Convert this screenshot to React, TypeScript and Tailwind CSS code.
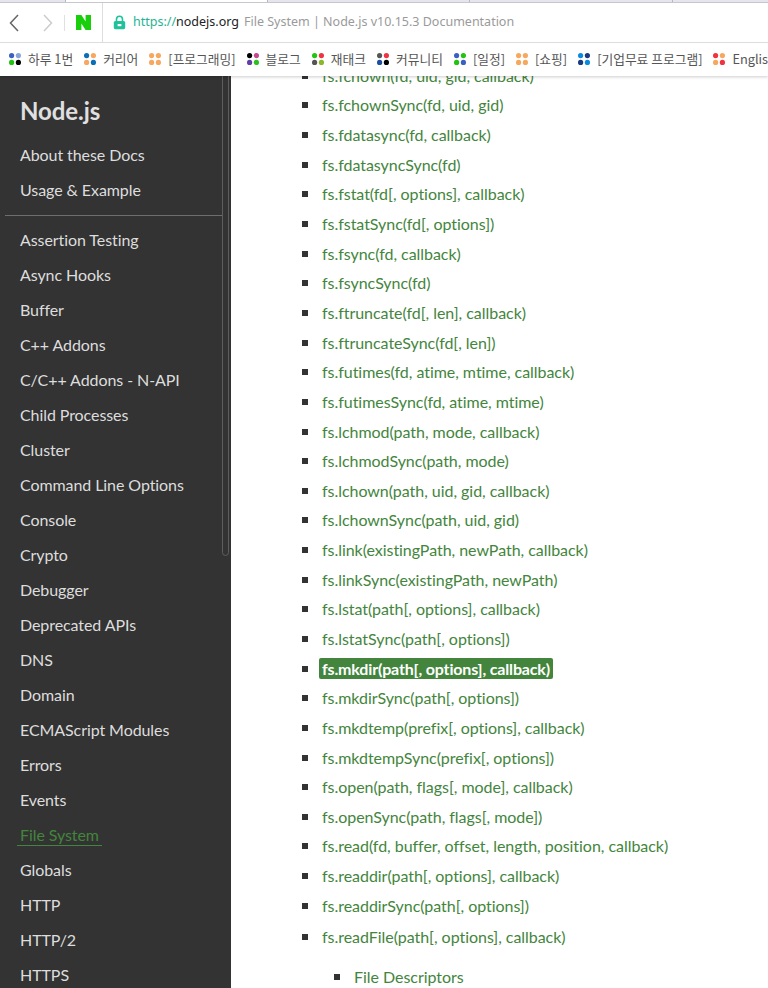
import React from 'react';

const navTop = ['About these Docs', 'Usage & Example'];
const navMain = [
  'Assertion Testing', 'Async Hooks', 'Buffer', 'C++ Addons', 'C/C++ Addons - N-API', 'Child Processes',
  'Cluster', 'Command Line Options', 'Console', 'Crypto', 'Debugger', 'Deprecated APIs', 'DNS', 'Domain',
  'ECMAScript Modules', 'Errors', 'Events', 'File System', 'Globals', 'HTTP', 'HTTP/2', 'HTTPS',
];

const fsItems = [
  'fs.fchown(fd, uid, gid, callback)', 'fs.fchownSync(fd, uid, gid)', 'fs.fdatasync(fd, callback)',
  'fs.fdatasyncSync(fd)', 'fs.fstat(fd[, options], callback)', 'fs.fstatSync(fd[, options])',
  'fs.fsync(fd, callback)', 'fs.fsyncSync(fd)', 'fs.ftruncate(fd[, len], callback)', 'fs.ftruncateSync(fd[, len])',
  'fs.futimes(fd, atime, mtime, callback)', 'fs.futimesSync(fd, atime, mtime)', 'fs.lchmod(path, mode, callback)',
  'fs.lchmodSync(path, mode)', 'fs.lchown(path, uid, gid, callback)', 'fs.lchownSync(path, uid, gid)',
  'fs.link(existingPath, newPath, callback)', 'fs.linkSync(existingPath, newPath)', 'fs.lstat(path[, options], callback)',
  'fs.lstatSync(path[, options])', 'fs.mkdir(path[, options], callback)', 'fs.mkdirSync(path[, options])',
  'fs.mkdtemp(prefix[, options], callback)', 'fs.mkdtempSync(prefix[, options])', 'fs.open(path, flags[, mode], callback)',
  'fs.openSync(path, flags[, mode])', 'fs.read(fd, buffer, offset, length, position, callback)',
  'fs.readdir(path[, options], callback)', 'fs.readdirSync(path[, options])',
];

const orange = '#f7a860';
const red = '#ef3340';
const green = '#22c40f';
const blue = '#3b5fc4';
const gray = '#555555';

const bookmarks = [
  { label: '하루 1번', dots: [blue, '#8aa6d8', green, '#000000'] },
  { label: '커리어', dots: ['#0a6fb8', orange, orange, '#0a6fb8'] },
  { label: '[프로그래밍]', dots: [orange, orange, orange, orange] },
  { label: '블로그', dots: ['#000000', '#c7488f', '#6040a8', '#2bc11e'] },
  { label: '재태크', dots: [green, red, gray, '#8ab82a'] },
  { label: '커뮤니티', dots: [gray, red, '#1d4fa0', '#000000'] },
  { label: '[일정]', dots: [blue, green, green, blue] },
  { label: '[쇼핑]', dots: [orange, orange, orange, orange] },
  { label: '[기업무료 프로그램]', dots: ['#0a8ae0', '#1a3a80', '#1a3a80', '#0a8ae0'] },
  { label: 'English', dots: [red, orange, orange, red] },
];

function Dots({ colors }: { colors: string[] }) {
  return (
    <svg width="12" height="12" viewBox="0 0 12 12" className="shrink-0">
      <circle cx="2.6" cy="2.6" r="2.6" fill={colors[0]} />
      <circle cx="9.4" cy="2.6" r="2.6" fill={colors[1]} />
      <circle cx="2.6" cy="9.4" r="2.6" fill={colors[2]} />
      <circle cx="9.4" cy="9.4" r="2.6" fill={colors[3]} />
    </svg>
  );
}

function TabStrip() {
  return (
    <div className="flex h-[3px] border-b border-[#c8c8cc] bg-[#e6e5ee]">
      <div className="w-[66px] border-r border-[#b8b8c0]" />
      <div className="w-[202px] border-r border-[#b8b8c0] bg-white" />
      <div className="w-[202px] border-r border-[#b8b8c0]" />
      <div className="w-[203px] border-r border-[#b8b8c0]" />
    </div>
  );
}

function BrowserBar() {
  return (
    <div className="relative z-10 shrink-0 bg-white shadow-[0_1px_3px_rgba(0,0,0,0.2)]">
      <TabStrip />
      <div className="flex h-[40px] items-center border-b border-[#dddddd]">
        <div className="flex h-full w-[102px] shrink-0 items-center pl-[9px]">
          <svg width="10" height="18" viewBox="0 0 10 18" fill="none" stroke="#666" strokeWidth="1.5">
            <path d="M9 1 L1.5 9 L9 17" />
          </svg>
          <svg width="10" height="18" viewBox="0 0 10 18" fill="none" stroke="#cccccc" strokeWidth="1.5" className="ml-[24px]">
            <path d="M1 1 L8.5 9 L1 17" />
          </svg>
          <div className="ml-[11px] h-[16px] w-px bg-[#e0e0e0]" />
          <span className="ml-[11px] block">
            <svg width="15" height="15" viewBox="0 0 15 15" className="block">
              <path d="M0 0H5.4L9.6 6.6V0H15V15H9.6L5.4 8.4V15H0Z" fill="#19ce0a" />
            </svg>
          </span>
        </div>
        <div className="flex h-full items-center border-l border-[#dddddd] pl-[10px] font-['Noto_Sans',sans-serif] text-[12.5px]">
          <svg width="13" height="15" viewBox="0 0 13 15" fill="none" className="mr-[7px]">
            <path d="M3.5 6V4.2a3 3 0 0 1 6 0V6" stroke="#1fc29a" strokeWidth="1.6" />
            <rect x="0.8" y="6" width="11.4" height="8.2" rx="1.6" fill="#1fc29a" />
            <rect x="4.6" y="9" width="3.8" height="2.2" fill="#fff" />
          </svg>
          <span className="text-[#1fb492]">https://</span>
          <span className="text-[#222222]">nodejs.org</span>
          <span className="ml-[5px] text-[#9a9a9a]">File System | Node.js v10.15.3 Documentation</span>
        </div>
      </div>
      <div className="flex h-[33px] items-center gap-[11px] overflow-hidden whitespace-nowrap pb-[1px] pl-[9px] font-['Noto_Sans_CJK_KR','Noto_Sans',sans-serif] text-[12.75px] text-[#555555]">
        {bookmarks.map((b) => (
          <div key={b.label} className="flex shrink-0 items-center gap-[7px]">
            <Dots colors={b.dots} />
            <span>{b.label}</span>
          </div>
        ))}
      </div>
    </div>
  );
}

function Sidebar() {
  return (
    <aside className="relative h-full w-[231px] shrink-0 overflow-hidden bg-[#333333] font-['Lato',sans-serif] text-[16px] tracking-[-0.08px] text-[#dddddd]">
      <div className="absolute right-[2px] top-[-6px] h-[486px] w-[7px] rounded-full border border-[#5e5e5e]" />
      <h1 className="pl-[20px] pt-[18px] text-[24px] font-bold leading-[34px] text-[#e0e0e0]">Node.js</h1>
      <ul className="mt-[9px]">
        {navTop.map((item) => (
          <li key={item} className="flex h-[35px] items-center pl-[20px]">{item}</li>
        ))}
      </ul>
      <div className="mb-[6px] ml-[5px] mr-[8px] mt-[8px] h-px bg-[#6e6e6e]" />
      <ul>
        {navMain.map((item) => (
          <li key={item} className="flex h-[35px] items-center pl-[20px]">
            {item === 'File System' ? (
              <span className="-ml-[3px] mt-[1px] border-b border-[#43853d] px-[3px] leading-[20px] text-[#43853d]">{item}</span>
            ) : item}
          </li>
        ))}
      </ul>
    </aside>
  );
}

function Bullet() {
  return <span className="absolute ml-[-20px] h-[6px] w-[6px] bg-[#333333]" />;
}

function Content() {
  return (
    <main className="h-full flex-1 overflow-hidden bg-white font-['Lato',sans-serif] text-[16px] tracking-[-0.04px] text-[#43853d]">
      <ul className="-mt-[15px] list-none">
        {fsItems.map((item) => {
          const active = item.startsWith('fs.mkdir(');
          return (
            <li key={item} className="flex h-[29.65px] items-center pl-[91px]">
              <Bullet />
              {active ? (
                <span className="-ml-[3px] rounded-[2px] bg-[#43853d] px-[3px] font-bold leading-[21px] tracking-[-0.16px] text-white">{item}</span>
              ) : (
                <span>{item}</span>
              )}
            </li>
          );
        })}
        <li className="flex h-[30px] items-center pl-[91px] pt-[2px]">
          <Bullet />
          <span>fs.readFile(path[, options], callback)</span>
        </li>
        <li className="mt-[11px] flex h-[30px] items-center pl-[123px]">
          <Bullet />
          <span>File Descriptors</span>
        </li>
      </ul>
    </main>
  );
}

export default function App() {
  return (
    <div className="flex h-[988px] w-[768px] flex-col overflow-hidden bg-white">
      <BrowserBar />
      <div className="flex min-h-0 flex-1">
        <Sidebar />
        <Content />
      </div>
    </div>
  );
}
